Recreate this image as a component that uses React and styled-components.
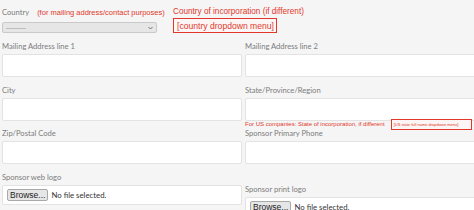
import React from 'react';
import styled, { createGlobalStyle } from 'styled-components';

const GlobalStyle = createGlobalStyle`
  html, body {
    margin: 0;
    padding: 0;
    background: #f5f5f5;
    overflow: hidden;
  }
  body {
    font-family: Lato, "Open Sans", sans-serif;
  }
`;

const RED = '#e2382c';

const Page = styled.div`
  width: 474px;
  height: 210px;
  overflow: hidden;
  padding: 7px 0 0 2px;
  box-sizing: border-box;
`;

const TopRow = styled.div`
  display: flex;
  align-items: flex-start;
  height: 34px;
`;

const CountryBlock = styled.div`
  width: 155px;
`;

const LabelLine = styled.div`
  display: flex;
  align-items: center;
  height: 10px;
`;

const Label = styled.div`
  font-size: 7.6px;
  line-height: 10px;
  color: #7c7c7c;
  white-space: nowrap;
`;

const Note = styled.span`
  font-family: "Liberation Sans", Arial, sans-serif;
  font-size: ${(p) => p.size || 7.5}px;
  color: ${RED};
  white-space: nowrap;
  margin-left: ${(p) => p.indent || 0}px;
`;

const Select = styled.div`
  margin-top: 5px;
  height: 11px;
  box-sizing: border-box;
  border: 1px solid #c9c9c9;
  border-radius: 2px;
  background: #e6e6e6;
  display: flex;
  align-items: center;
  justify-content: space-between;
  padding: 0 3px;
  font-family: "Liberation Sans", Arial, sans-serif;
  font-size: 6px;
  color: #666;
`;

const Incorporation = styled.div`
  margin-left: 16px;
  margin-top: 0;
  display: flex;
  flex-direction: column;
  align-items: flex-start;
`;

const RedBox = styled.div`
  margin-top: ${(p) => p.gap || 0}px;
  border: 1.5px solid ${RED};
  padding: ${(p) => p.pad || '0 3px'};
  width: ${(p) => p.w}px;
  height: ${(p) => p.h}px;
  box-sizing: border-box;
  display: flex;
  align-items: center;
  background: #fbf6f5;
  overflow: hidden;
`;

const Grid = styled.div`
  display: grid;
  grid-template-columns: 240px 240px;
  column-gap: 3px;
`;

const Field = styled.div`
  position: relative;
  margin-bottom: 7.6px;
  margin-top: ${(p) => p.offset || 0}px;
`;

const Input = styled.div`
  margin-top: 3px;
  height: 23px;
  box-sizing: border-box;
  background: #fff;
  border: 1px solid #e3e3e3;
  border-radius: 2px;
`;

const FileBox = styled.div`
  margin-top: 3px;
  height: 20px;
  box-sizing: border-box;
  background: #fff;
  border: 1px solid #e3e3e3;
  border-radius: 2px;
  display: flex;
  align-items: center;
  padding-left: 4px;
  gap: 3px;
`;

const Browse = styled.div`
  height: 12px;
  padding: 0 2px;
  box-sizing: border-box;
  border: 1px solid #a9a9a9;
  border-radius: 2px;
  background: #e6e6e6;
  font-family: "Liberation Sans", Arial, sans-serif;
  font-size: 8.5px;
  line-height: 10px;
  color: #222;
`;

const FileText = styled.span`
  font-size: 7.8px;
  color: #333;
`;

const StateNote = styled.div`
  position: absolute;
  left: 0;
  top: 34px;
  display: flex;
  align-items: center;
  gap: 6px;
`;

const Chevron = () => (
  <svg width="5" height="4" viewBox="0 0 5 4">
    <path d="M0.5 1 L2.5 3 L4.5 1" fill="none" stroke="#666" strokeWidth="0.9" />
  </svg>
);

const FileInput = () => (
  <FileBox>
    <Browse>Browse...</Browse>
    <FileText>No file selected.</FileText>
  </FileBox>
);

const TextField = ({ label, children }) => (
  <Field>
    <Label>{label}</Label>
    <Input />
    {children}
  </Field>
);

export default function App() {
  return (
    <Page>
      <GlobalStyle />
      <TopRow>
        <CountryBlock>
          <LabelLine>
            <Label>Country</Label>
            <Note indent={8}>(for mailing address/contact purposes)</Note>
          </LabelLine>
          <Select>
            <span>----------</span>
            <Chevron />
          </Select>
        </CountryBlock>
        <Incorporation>
          <Note size={8.2}>Country of incorporation (if different)</Note>
          <RedBox gap={2} w={104} h={15}>
            <Note size={8.6}>[country dropdown menu]</Note>
          </RedBox>
        </Incorporation>
      </TopRow>
      <Grid>
        <TextField label="Mailing Address line 1" />
        <TextField label="Mailing Address line 2" />
        <TextField label="City" />
        <TextField label="State/Province/Region">
          <StateNote>
            <Note size={6}>For US companies: State of incorporation, if different</Note>
            <RedBox w={81} h={11} pad="0 2px">
              <Note size={4}>[US state full name dropdown menu]</Note>
            </RedBox>
          </StateNote>
        </TextField>
        <TextField label="Zip/Postal Code" />
        <TextField label="Sponsor Primary Phone" />
        <Field>
          <Label>Sponsor web logo</Label>
          <FileInput />
        </Field>
        <Field offset={12}>
          <Label>Sponsor print logo</Label>
          <FileInput />
        </Field>
      </Grid>
    </Page>
  );
}
